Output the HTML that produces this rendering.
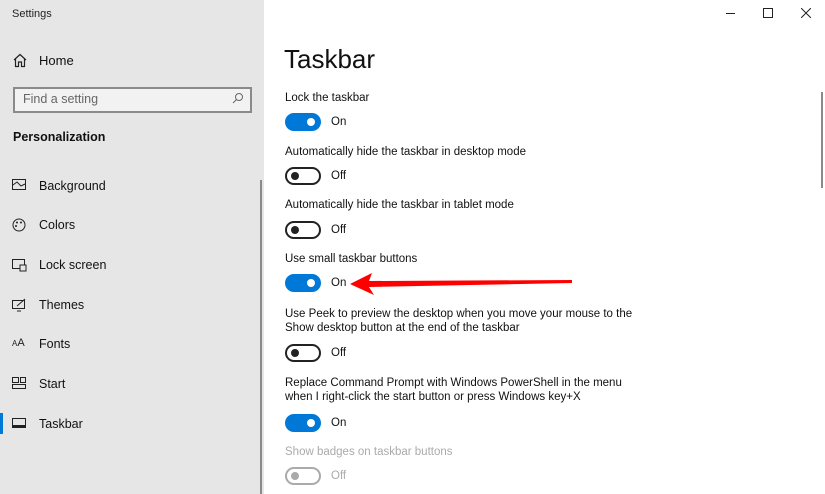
<!DOCTYPE html>
<html><head><meta charset="utf-8"><style>
body{margin:0;width:825px;height:494px;overflow:hidden;font-family:"Liberation Sans",sans-serif;background:#fff;position:relative;color:#000}
.sb{position:absolute;left:0;top:0;width:264px;height:494px;background:#e6e6e6}
.t{position:absolute;white-space:nowrap}
.nav{position:absolute;left:39px;font-size:12.5px;color:#111}
.ic{position:absolute;left:12px}
.lbl{position:absolute;left:285px;font-size:11.5px;color:#111;line-height:14px;white-space:nowrap}
.tg{position:absolute;left:285px;width:32px;height:14px;border-radius:10px;border:2px solid #222;background:#fff}
.tg::after{content:"";position:absolute;left:4px;top:3px;width:8px;height:8px;border-radius:50%;background:#222}
.tg.on{background:#0078d7;border-color:#0078d7}
.tg.on::after{left:auto;right:4px;background:#fff}
.tg.dis{border-color:#aaa}.tg.dis::after{background:#aaa}
.st{position:absolute;left:331px;font-size:11.5px;color:#111}
</style></head><body>
<div class="sb"></div>
<div class="t" style="left:12px;top:8px;font-size:11px;color:#222">Settings</div>
<svg class="ic" style="top:53px" width="16" height="15" viewBox="0 0 16 15"><path d="M2 7 L8 1.5 L14 7 M3.5 6 V13.5 H6.5 V9 H9.5 V13.5 H12.5 V6" fill="none" stroke="#222" stroke-width="1.2"/></svg>
<div class="nav" style="top:53px;font-size:13px">Home</div>
<div style="position:absolute;left:13px;top:87px;width:235px;height:22px;border:2px solid #8a8a8a;background:#f2f2f2"></div>
<div class="t" style="left:23px;top:92px;font-size:12.5px;color:#666">Find a setting</div>
<svg style="position:absolute;left:232px;top:92px" width="12" height="12" viewBox="0 0 12 12"><circle cx="7" cy="5" r="3.5" fill="none" stroke="#666"/><path d="M4.5 7.5 L1 11" stroke="#666"/></svg>
<div class="t" style="left:13px;top:130px;font-size:12.5px;font-weight:bold;color:#111">Personalization</div>
<div style="position:absolute;left:260px;top:180px;width:2px;height:314px;background:#8a8a8a"></div>
<svg class="ic" style="top:179px" width="15" height="13"><rect x=".5" y=".5" width="13" height="10" fill="none" stroke="#222"/><path d="M1 6 L5 3 L9 7 L13 5" fill="none" stroke="#222"/></svg>
<div class="nav" style="top:179px">Background</div>
<svg class="ic" style="top:218px" width="15" height="14"><circle cx="7" cy="7" r="6" fill="none" stroke="#222"/><circle cx="5" cy="4.5" r="1" fill="#222"/><circle cx="9" cy="4.5" r="1" fill="#222"/><circle cx="4" cy="8" r="1" fill="#222"/></svg>
<div class="nav" style="top:218px">Colors</div>
<svg class="ic" style="top:259px" width="15" height="13"><rect x=".5" y=".5" width="12" height="9" fill="none" stroke="#222"/><rect x="8" y="6" width="6" height="6" fill="#e6e6e6" stroke="#222"/></svg>
<div class="nav" style="top:258px">Lock screen</div>
<svg class="ic" style="top:298px" width="15" height="14"><rect x=".5" y="2.5" width="12" height="8" fill="none" stroke="#222"/><path d="M5 13 H9 M5 8 L13 1" stroke="#222"/></svg>
<div class="nav" style="top:298px">Themes</div>
<div class="t" style="left:12px;top:337px;font-size:11px;color:#222"><span style="font-size:8px">A</span>A</div>
<div class="nav" style="top:337px">Fonts</div>
<svg class="ic" style="top:377px" width="15" height="13"><rect x=".5" y=".5" width="6" height="5" fill="none" stroke="#222"/><rect x="8.5" y=".5" width="5" height="5" fill="none" stroke="#222"/><rect x=".5" y="7.5" width="13" height="4" fill="none" stroke="#222"/></svg>
<div class="nav" style="top:377px">Start</div>
<div style="position:absolute;left:0;top:413px;width:3px;height:21px;background:#0078d7"></div>
<svg class="ic" style="top:418px" width="15" height="11"><rect x=".5" y=".5" width="13" height="9" fill="none" stroke="#222"/><rect x="1" y="7" width="12" height="2" fill="#222"/></svg>
<div class="nav" style="top:417px">Taskbar</div>
<div style="position:absolute;left:726px;top:13px;width:9px;height:1px;background:#222"></div>
<div style="position:absolute;left:763px;top:8px;width:8px;height:8px;border:1px solid #222"></div>
<svg style="position:absolute;left:801px;top:8px" width="10" height="10"><path d="M0 0 L10 10 M10 0 L0 10" stroke="#222"/></svg>
<div style="position:absolute;left:821px;top:92px;width:2px;height:96px;background:#8a8a8a"></div>
<div class="t" style="left:284px;top:44px;font-size:26px;color:#111;font-weight:300">Taskbar</div>
<div class="lbl" style="top:91px">Lock the taskbar</div>
<div class="tg on" style="top:113px"></div><div class="st" style="top:116px">On</div>
<div class="lbl" style="top:145px">Automatically hide the taskbar in desktop mode</div>
<div class="tg" style="top:167px"></div><div class="st" style="top:170px">Off</div>
<div class="lbl" style="top:198px">Automatically hide the taskbar in tablet mode</div>
<div class="tg" style="top:221px"></div><div class="st" style="top:224px">Off</div>
<div class="lbl" style="top:252px">Use small taskbar buttons</div>
<div class="tg on" style="top:274px"></div><div class="st" style="top:277px">On</div>
<div class="lbl" style="top:307px">Use Peek to preview the desktop when you move your mouse to the<br>Show desktop button at the end of the taskbar</div>
<div class="tg" style="top:344px"></div><div class="st" style="top:347px">Off</div>
<div class="lbl" style="top:376px">Replace Command Prompt with Windows PowerShell in the menu<br>when I right-click the start button or press Windows key+X</div>
<div class="tg on" style="top:414px"></div><div class="st" style="top:417px">On</div>
<div class="lbl" style="top:445px;color:#aaa">Show badges on taskbar buttons</div>
<div class="tg dis" style="top:467px"></div><div class="st" style="top:470px;color:#aaa">Off</div>
<svg style="position:absolute;left:345px;top:270px" width="232" height="26"><path d="M5 14 L27 3 L24 11 L227 10 L227 13 L24 17 L29 25 Z" fill="#f00"/></svg>
</body></html>
